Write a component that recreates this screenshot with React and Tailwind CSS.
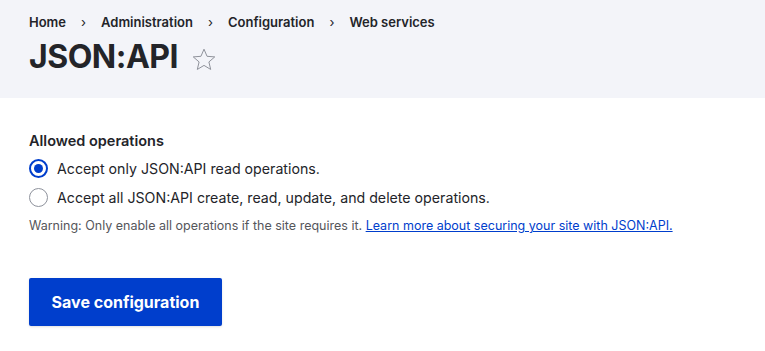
import { useState } from 'react';

function Star() {
    return (
        <svg width="24" height="23" viewBox="0 0 24 23" className="ml-[14px] mt-[4px]">
            <path
                d="M12 1.2l3.05 7.1 7.7.6-5.85 5.05 1.8 7.5L12 17.4l-6.7 4.05 1.8-7.5L1.25 8.9l7.7-.6z"
                fill="none"
                stroke="#8f929b"
                strokeWidth="1"
                strokeLinejoin="round"
            />
        </svg>
    );
}

function Radio({ checked, label, onChange }) {
    return (
        <label className="flex items-center h-[29px] cursor-pointer" onClick={onChange}>
            <span
                className={`w-[19px] h-[19px] rounded-full flex items-center justify-center bg-white ${checked
                    ? 'border-[2px] border-[#003ecc]'
                    : 'border border-[#8e929c]'
                    }`}
            >
                {checked && <span className="w-[9px] h-[9px] rounded-full bg-[#003ecc]" />}
            </span>
            <span className="ml-[9px] text-[14.2px] text-[#232429]">{label}</span>
        </label>
    );
}

export default function App() {
    const [mode, setMode] = useState('read');
    const crumbs = ['Home', 'Administration', 'Configuration', 'Web services'];

    return (
        <div className="min-h-screen bg-white font-['Inter',sans-serif] text-[#232429]">
            {/* Page header */}
            <header className="bg-[#f3f4f9] h-[98px] px-[29px] pt-[13px]">
                <nav className="flex items-center text-[13px] font-semibold leading-[18px]">
                    {crumbs.map((c, i) => (
                        <span key={c} className="flex items-center">
                            {i > 0 && <span className="mx-[15px] text-[#232429] font-normal">›</span>}
                            {c}
                        </span>
                    ))}
                </nav>
                <div className="flex items-center mt-[6px]">
                    <h1 className="text-[32px] font-bold leading-[40px] tracking-[-0.5px]">JSON:API</h1>
                    <Star />
                </div>
            </header>

            {/* Form */}
            <main className="px-[29px] pt-[33px]">
                <fieldset>
                    <legend className="text-[14.5px] font-semibold leading-[20px] mb-[3px]">Allowed operations</legend>
                    <Radio
                        checked={mode === 'read'}
                        label="Accept only JSON:API read operations."
                        onChange={() => setMode('read')}
                    />
                    <Radio
                        checked={mode === 'all'}
                        label="Accept all JSON:API create, read, update, and delete operations."
                        onChange={() => setMode('all')}
                    />
                    <p className="text-[12.5px] text-[#55565b] leading-[18px] mt-[5px]">
                        Warning: Only enable all operations if the site requires it.{' '}
                        <a href="#" className="text-[#003ecc] underline">Learn more about securing your site with JSON:API.</a>
                    </p>
                </fieldset>
                <button className="mt-[43px] h-[48px] w-[193px] rounded-[2px] bg-[#003ecc] text-white text-[16px] font-bold shadow-sm">
                    Save configuration
                </button>
            </main>
        </div>
    );
}
